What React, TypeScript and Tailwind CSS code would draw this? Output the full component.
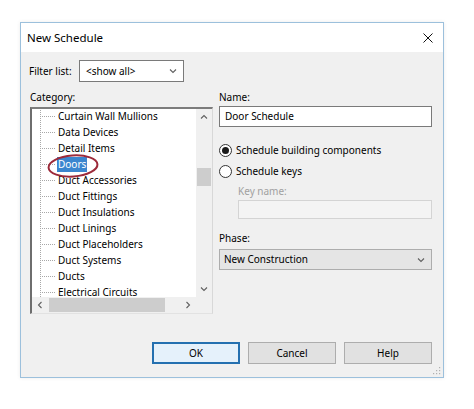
import React from 'react';

const categories = [
  'Curtain Wall Mullions',
  'Data Devices',
  'Detail Items',
  'Doors',
  'Duct Accessories',
  'Duct Fittings',
  'Duct Insulations',
  'Duct Linings',
  'Duct Placeholders',
  'Duct Systems',
  'Ducts',
  'Electrical Circuits',
];

const Chevron: React.FC<{ dir: 'up' | 'down' | 'left' | 'right'; size?: number; color?: string }> = ({
  dir,
  size = 8,
  color = '#606060',
}) => {
  const d = {
    down: 'M1 2.5 L4 5.5 L7 2.5',
    up: 'M1 5.5 L4 2.5 L7 5.5',
    left: 'M5.5 1 L2.5 4 L5.5 7',
    right: 'M2.5 1 L5.5 4 L2.5 7',
  }[dir];
  return (
    <svg width={size} height={size} viewBox="0 0 8 8" fill="none">
      <path d={d} stroke={color} strokeWidth={1.1} />
    </svg>
  );
};

const TreeLine: React.FC = () => (
  <svg width={26} height={16} className="shrink-0">
    <line x1={8.5} y1={0} x2={8.5} y2={16} stroke="#a8a8a8" strokeDasharray="1 1" />
    <line x1={10} y1={8.5} x2={24} y2={8.5} stroke="#a8a8a8" strokeDasharray="1 1" />
  </svg>
);

const Radio: React.FC<{ checked?: boolean; label: string }> = ({ checked, label }) => (
  <div className="h-[16px] flex items-center gap-[4px]">
    <span className="w-[13px] h-[13px] rounded-full border border-[#333333] bg-white flex items-center justify-center">
      {checked && <span className="w-[7px] h-[7px] rounded-full bg-[#1a1a1a]" />}
    </span>
    <span>{label}</span>
  </div>
);

const CategoryList: React.FC = () => (
  <div className="w-[183px] h-[207px] bg-white border-t-2 border-l-2 border-t-[#7c7c7c] border-l-[#6e6e6e] border-r border-b border-r-[#d8d8d8] border-b-[#e2e2e2] flex flex-col">
    <div className="flex flex-1 min-h-0">
      <div className="flex-1 relative overflow-hidden">
        <div className="-mt-[1px]">
          {categories.map((c) => (
            <div key={c} className="h-[16px] flex items-center">
              <TreeLine />
              {c === 'Doors' ? (
                <span className="h-[15px] px-[1px] -ml-[1px] bg-[#3b86cf] text-white leading-[15px]">{c}</span>
              ) : (
                <span className="whitespace-nowrap leading-[9px]">{c}</span>
              )}
            </div>
          ))}
        </div>
        {/* red annotation ring */}
        <svg className="absolute left-[14px] top-[44px]" width={54} height={26} viewBox="0 0 54 26">
          <ellipse cx={27} cy={13} rx={24.5} ry={10.5} fill="none" stroke="#9c2a3a" strokeWidth={2} transform="rotate(-4 27 13)" />
        </svg>
      </div>
      <div className="w-[16px] bg-[#f0f0f0] flex flex-col">
        <div className="h-[16px] flex items-center justify-center">
          <Chevron dir="up" />
        </div>
        <div className="flex-1 pt-[43px] px-[1px]">
          <div className="h-[18px] bg-[#cdcdcd]" />
        </div>
        <div className="h-[16px] flex items-center justify-center">
          <Chevron dir="down" />
        </div>
      </div>
    </div>
    <div className="h-[16px] flex">
      <div className="flex-1 bg-[#f0f0f0] flex">
        <div className="w-[16px] flex items-center justify-center">
          <Chevron dir="left" />
        </div>
        <div className="flex-1 py-[1px] pl-[1px] pr-[15px]">
          <div className="h-full bg-[#cdcdcd]" />
        </div>
        <div className="w-[16px] flex items-center justify-center">
          <Chevron dir="right" />
        </div>
      </div>
      <div className="w-[16px] bg-[#f0f0f0]" />
    </div>
  </div>
);

export default function App() {
  return (
    <div className="w-[474px] h-[409px] bg-white pt-[22px] pl-[20px] font-['Noto_Sans',sans-serif] text-[10px] text-black">
      <div className="w-[424px] h-[356px] border border-[#9cc0dc] flex flex-col shadow-[0_0_4px_rgba(0,0,0,0.08)]">
        {/* Title bar */}
        <div className="h-[29px] bg-white flex items-center justify-between pl-[6px] pr-[10px]">
          <span className="text-[11.5px]">New Schedule</span>
          <svg width={10} height={10} viewBox="0 0 10 10">
            <path d="M0.5 0.5 L9.5 9.5 M9.5 0.5 L0.5 9.5" stroke="#111" strokeWidth={1} />
          </svg>
        </div>

        {/* Body */}
        <div className="flex-1 bg-[#f0f0f0] relative flex flex-col pl-[8px] pr-[11px] pt-[8px] pb-[13px]">
          <div className="flex items-center h-[22px]">
            <span className="w-[50px]">Filter list:</span>
            <div className="w-[105px] h-[22px] bg-white border border-[#7a7a7a] flex items-center justify-between pl-[6px] pr-[6px]">
              <span>&lt;show all&gt;</span>
              <Chevron dir="down" />
            </div>
          </div>

          <div className="flex gap-[6px] mt-[6px]">
            {/* Left column */}
            <div className="flex flex-col pl-[1px]">
              <div className="h-[19px] flex items-center">Category:</div>
              <CategoryList />
            </div>

            {/* Right column */}
            <div className="w-[214px] flex flex-col">
              <div className="h-[18px] flex items-center">Name:</div>
              <div className="h-[21px] bg-white border border-[#7a7a7a] flex items-center pl-[5px]">Door Schedule</div>
              <div className="mt-[15px]">
                <Radio checked label="Schedule building components" />
              </div>
              <div className="mt-[5px]">
                <Radio label="Schedule keys" />
              </div>
              <div className="ml-[19px] mt-[5px] h-[14px] flex items-center text-[#a0a0a0]">Key name:</div>
              <div className="ml-[19px] mt-[2px] h-[19px] bg-[#f4f4f4] border border-[#d4d4d4]" />
              <div className="mt-[12px] h-[14px] flex items-center">Phase:</div>
              <div className="mt-[4px] h-[21px] bg-[#e5e5e5] border border-[#adadad] flex items-center justify-between pl-[4px] pr-[6px]">
                <span>New Construction</span>
                <Chevron dir="down" />
              </div>
            </div>
          </div>

          {/* Buttons */}
          <div className="mt-auto flex justify-end gap-[8px]">
            <button className="w-[88px] h-[22px] bg-[#e5f1fb] border-2 border-[#2470b0] flex items-center justify-center">OK</button>
            <button className="w-[88px] h-[22px] bg-[#e1e1e1] border border-[#adadad] flex items-center justify-center">Cancel</button>
            <button className="w-[88px] h-[22px] bg-[#e1e1e1] border border-[#adadad] flex items-center justify-center">Help</button>
          </div>

          {/* size grip */}
          <svg className="absolute right-[2px] bottom-[2px]" width={9} height={9} viewBox="0 0 9 9">
            <rect x={7} y={1} width={1.2} height={1.2} fill="#b0b0b0" />
            <rect x={4} y={4} width={1.2} height={1.2} fill="#b0b0b0" />
            <rect x={7} y={4} width={1.2} height={1.2} fill="#b0b0b0" />
            <rect x={1} y={7} width={1.2} height={1.2} fill="#b0b0b0" />
            <rect x={4} y={7} width={1.2} height={1.2} fill="#b0b0b0" />
            <rect x={7} y={7} width={1.2} height={1.2} fill="#b0b0b0" />
          </svg>
        </div>
      </div>
    </div>
  );
}
